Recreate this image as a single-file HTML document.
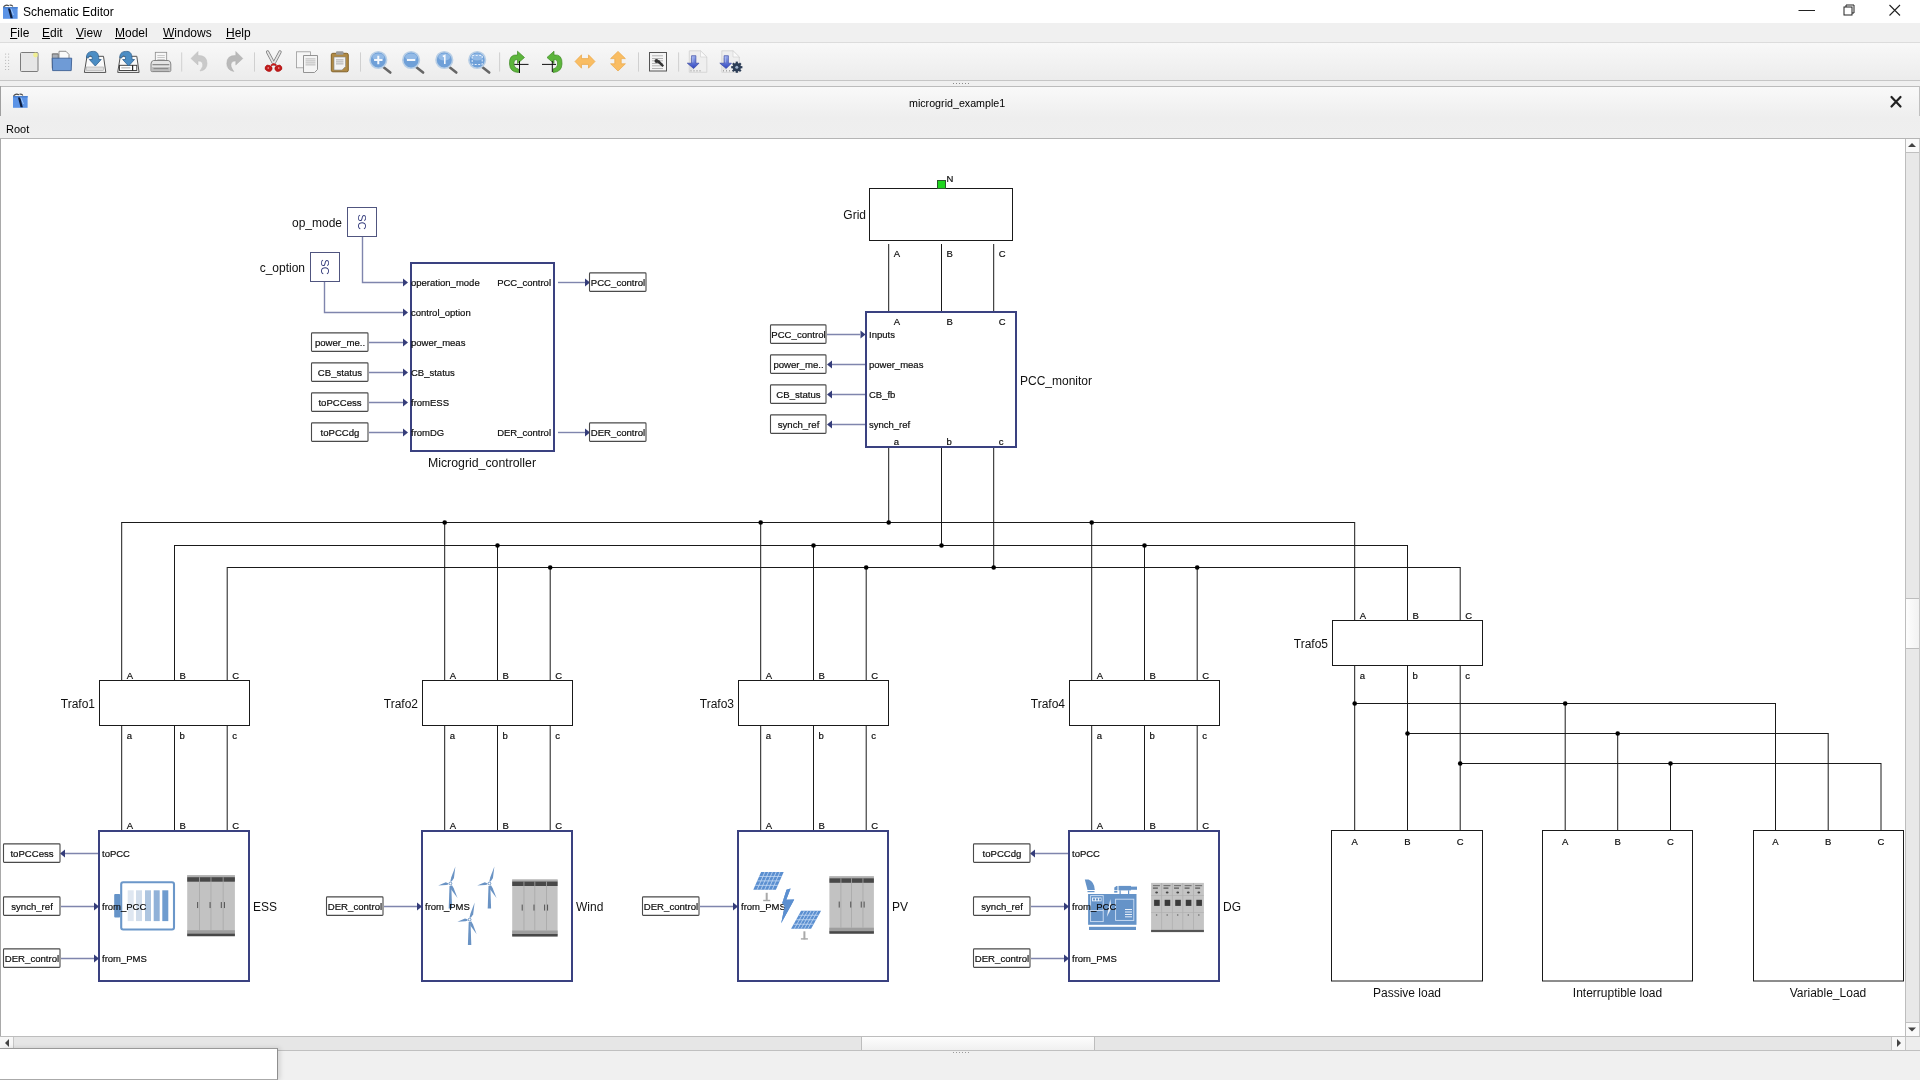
<!DOCTYPE html>
<html><head><meta charset="utf-8">
<style>
*{margin:0;padding:0;box-sizing:border-box}
html,body{width:1920px;height:1080px;overflow:hidden;background:#f0f0f0;font-family:"Liberation Sans", sans-serif;position:relative}
.abs{position:absolute}
.menu{position:absolute;top:3px;font-size:12px;color:#000}
.menu u{text-decoration:underline}
svg text{font-family:"Liberation Sans", sans-serif}
svg,div,span{will-change:transform}
</style></head><body>
<div class="abs" style="left:0;top:0;width:1920px;height:23px;background:#fff"></div>
<svg class="abs" style="left:2px;top:3px" width="18" height="18" viewBox="0 0 18 18"><rect x="1" y="4" width="14.6" height="11.8" fill="#5b93e6"/><rect x="1" y="4" width="14.6" height="1.5" fill="#4a80d0"/><path d="M6,5.5 L8.3,5.5 L10.8,15.3 L8.5,15.3 Z" fill="#0d1d3d"/><path d="M8.8,5.5 L11.5,12" stroke="#a6cdfa" stroke-width="0.9"/><path d="M1.5,3.8 Q4,1 7,2.8 M7.5,2.3 Q10,1.5 10.8,3.5" stroke="#4a4a4a" stroke-width="1.1" fill="none"/></svg>
<div class="abs" style="left:23px;top:4.5px;font-size:12px;color:#000;white-space:nowrap">Schematic Editor</div>
<svg class="abs" style="left:1780px;top:0" width="140" height="23" viewBox="1780 0 140 23">
 <rect x="1798.5" y="10" width="16.5" height="1" fill="#222"/>
 <rect x="1844" y="7" width="8" height="8" fill="none" stroke="#222" stroke-width="1"/>
 <path d="M1846,7 V5 H1854 V13 H1852" fill="none" stroke="#222" stroke-width="1"/>
 <path d="M1889.5,5 L1900,15.5 M1900,5 L1889.5,15.5" stroke="#222" stroke-width="1.1"/>
</svg>
<div class="abs" style="left:0;top:23px;width:1920px;height:20px;background:#f0f0f0"></div>
<div class="abs" style="left:0;top:42px;width:1920px;height:1px;background:#dcdcdc"></div>
<span class="menu" style="left:10px;top:26px"><u>F</u>ile</span>
<span class="menu" style="left:42px;top:26px"><u>E</u>dit</span>
<span class="menu" style="left:76px;top:26px"><u>V</u>iew</span>
<span class="menu" style="left:115px;top:26px"><u>M</u>odel</span>
<span class="menu" style="left:163px;top:26px"><u>W</u>indows</span>
<span class="menu" style="left:226px;top:26px"><u>H</u>elp</span>
<div class="abs" style="left:0;top:43px;width:1920px;height:37px;background:linear-gradient(#f8f8f8,#ececec)"></div>
<div class="abs" style="left:0;top:80px;width:1920px;height:1px;background:#c6c6c6"></div>
<div class="abs" style="left:0;top:81px;width:1920px;height:5px;background:#f0f0f0"></div>
<div class="abs" style="left:953px;top:83px;width:1px;height:1px;background:#8a8a8a"></div><div class="abs" style="left:956px;top:83px;width:1px;height:1px;background:#8a8a8a"></div><div class="abs" style="left:959px;top:83px;width:1px;height:1px;background:#8a8a8a"></div><div class="abs" style="left:962px;top:83px;width:1px;height:1px;background:#8a8a8a"></div><div class="abs" style="left:965px;top:83px;width:1px;height:1px;background:#8a8a8a"></div><div class="abs" style="left:968px;top:83px;width:1px;height:1px;background:#8a8a8a"></div>
<svg class="abs" style="left:0;top:43px" width="760" height="38" viewBox="0 43 760 38"><defs><linearGradient id="impg" x1="0" y1="0" x2="0" y2="1"><stop offset="0" stop-color="#9db0ee"/><stop offset="1" stop-color="#2f45c0"/></linearGradient></defs>
<rect x="5.1" y="53.6" width="1" height="1" fill="#b5b5b5"/>
<rect x="8.1" y="53.6" width="1" height="1" fill="#b5b5b5"/>
<rect x="5.1" y="56.6" width="1" height="1" fill="#b5b5b5"/>
<rect x="8.1" y="56.6" width="1" height="1" fill="#b5b5b5"/>
<rect x="5.1" y="59.9" width="1" height="1" fill="#b5b5b5"/>
<rect x="8.1" y="59.9" width="1" height="1" fill="#b5b5b5"/>
<rect x="5.1" y="62.9" width="1" height="1" fill="#b5b5b5"/>
<rect x="8.1" y="62.9" width="1" height="1" fill="#b5b5b5"/>
<rect x="5.1" y="66.0" width="1" height="1" fill="#b5b5b5"/>
<rect x="8.1" y="66.0" width="1" height="1" fill="#b5b5b5"/>
<rect x="5.1" y="69.0" width="1" height="1" fill="#b5b5b5"/>
<rect x="8.1" y="69.0" width="1" height="1" fill="#b5b5b5"/>
<rect x="20.5" y="52.5" width="17.5" height="19" rx="1" fill="#e6e6e6" stroke="#7b7b7b" stroke-width="1"/>
<circle cx="35.5" cy="55" r="2.4" fill="#f1ef8a" opacity="0.9"/>
<path d="M52.5,55 L58,55 L58,53 L52.5,53 Z" fill="#b9b9b9"/>
<rect x="52.2" y="54" width="6" height="14" fill="#a9aeb5" stroke="#666" stroke-width="0.8"/>
<path d="M59,51.3 L66,51.3 L69,54.5 L69,61 L59,61 Z" fill="#fafafa" stroke="#777" stroke-width="0.8"/>
<path d="M52.2,58.2 L71.7,58.2 L71.2,70.6 L52.6,70.6 Z" fill="#6f9bd6" stroke="#3c5f93" stroke-width="0.9"/>
<g transform="translate(84,0)"><path d="M3,56.3 L19.5,56.3 L21.8,72.4 L0.4,72.4 Z" fill="#fafafa" stroke="#4f4f4f" stroke-width="1" stroke-linejoin="round"/><rect x="2.2" y="67" width="17.3" height="3.5" fill="#dedede" stroke="#aaa" stroke-width="0.6"/><path d="M2.5,57.8 C2.5,52.5 5.5,51.4 9.5,51.4 C13,51.4 14.8,53.5 14.8,59.5 L17.2,59.5 L11.3,66 L5.3,59.5 L8.3,59.5 C8.3,57 7.5,55.6 6.3,55.6 C5.1,55.7 4.7,56.8 4.7,57.8 Z" fill="#4b8dc4" stroke="#2d5f8e" stroke-width="0.8" stroke-linejoin="round"/></g>
<g transform="translate(117.3,0)"><path d="M3,56.3 L19.5,56.3 L21.8,72.4 L0.4,72.4 Z" fill="#fafafa" stroke="#4f4f4f" stroke-width="1" stroke-linejoin="round"/><rect x="2.2" y="65.3" width="17.3" height="5.2" fill="#fff" stroke="#333" stroke-width="0.9"/><rect x="4" y="67" width="9" height="1.6" fill="#c8c8c8"/><rect x="14.8" y="65.3" width="1.1" height="5.2" fill="#111"/><path d="M2.5,57.8 C2.5,52.5 5.5,51.4 9.5,51.4 C13,51.4 14.8,53.5 14.8,59.5 L17.2,59.5 L11.3,66 L5.3,59.5 L8.3,59.5 C8.3,57 7.5,55.6 6.3,55.6 C5.1,55.7 4.7,56.8 4.7,57.8 Z" fill="#4b8dc4" stroke="#2d5f8e" stroke-width="0.8" stroke-linejoin="round"/></g>
<rect x="155.3" y="52.3" width="11.4" height="10" fill="#f6f6f6" stroke="#8a8a8a" stroke-width="0.8"/>
<rect x="157.3" y="55" width="7.5" height="0.7" fill="#b5b5b5"/>
<rect x="157.3" y="57" width="7.5" height="0.7" fill="#b5b5b5"/>
<rect x="157.3" y="59" width="7.5" height="0.7" fill="#b5b5b5"/>
<path d="M153.5,60.5 L168.3,60.5 Q170.8,61 170.8,64 L170.8,70.5 Q170.8,71.6 169.5,71.6 L152.2,71.6 Q151,71.6 151,70.5 L151,64 Q151,61 153.5,60.5 Z" fill="#e4e4e4" stroke="#777" stroke-width="0.9"/>
<rect x="152.5" y="64.3" width="16.8" height="0.9" fill="#666"/>
<rect x="152" y="67" width="17.8" height="4" fill="#bdbdbd"/>
<rect x="153.5" y="68.3" width="14.8" height="0.8" fill="#777"/>
<rect x="181.2" y="52.4" width="1" height="19.2" fill="#d0d0d0"/>
<rect x="254.0" y="52.4" width="1" height="19.2" fill="#d0d0d0"/>
<rect x="360.0" y="52.4" width="1" height="19.2" fill="#d0d0d0"/>
<rect x="499.1" y="52.4" width="1" height="19.2" fill="#d0d0d0"/>
<rect x="638.0" y="52.4" width="1" height="19.2" fill="#d0d0d0"/>
<rect x="678.1" y="52.4" width="1" height="19.2" fill="#d0d0d0"/>
<path d="M191,58.5 L198,51.5 L198,55.5 Q207,55 207,63.5 Q207,70 200,71 Q204,66 202.5,63 Q201,60.5 198,61 L198,65 Z" fill="#c9c9c9" stroke="#bdbdbd" stroke-width="0.5"/>
<path d="M242.8,58.5 L235.8,51.5 L235.8,55.5 Q226.8,55 226.8,63.5 Q226.8,70 233.8,71.5 Q229.8,66 231.3,63 Q232.8,60.5 235.8,61 L235.8,65 Z" fill="#b9b9b9" stroke="#adadad" stroke-width="0.5"/>
<path d="M267.6,52 L274,64 M280,52 L273.6,64" stroke="#7a7a7a" stroke-width="3.3" fill="none" stroke-linecap="round"/>
<path d="M267.6,52 L274,64 M280,52 L273.6,64" stroke="#e4e4e4" stroke-width="1.7" fill="none" stroke-linecap="round"/>
<ellipse cx="268.6" cy="68.3" rx="3.6" ry="3" transform="rotate(25 268.6 68.3)" fill="#c41a1a" stroke="#a51010" stroke-width="0.6"/><ellipse cx="278.4" cy="68.3" rx="3.6" ry="3" transform="rotate(-25 278.4 68.3)" fill="#c41a1a" stroke="#a51010" stroke-width="0.6"/>
<path d="M271,65.5 L273.8,64 L276.5,65.5" stroke="#c41a1a" stroke-width="1.6" fill="none"/>
<circle cx="268.2" cy="68" r="0.7" fill="#f4caca"/><circle cx="278.8" cy="68" r="0.7" fill="#f4caca"/>
<rect x="296.5" y="51.8" width="14" height="16" fill="#f6f6f6" stroke="#999" stroke-width="0.8"/>
<path d="M303.5,55.5 L317.5,55.5 L317.5,69.5 L314.5,72.5 L303.5,72.5 Z" fill="#f4f4f4" stroke="#888" stroke-width="0.9"/>
<rect x="305.5" y="58.5" width="10" height="0.8" fill="#aaa"/>
<rect x="305.5" y="60.5" width="10" height="0.8" fill="#aaa"/>
<rect x="305.5" y="62.5" width="10" height="0.8" fill="#aaa"/>
<rect x="305.5" y="64.5" width="10" height="0.8" fill="#aaa"/>
<rect x="331.3" y="53.3" width="17" height="18.5" rx="1.5" fill="#b08a45" stroke="#7a5a20" stroke-width="0.9"/>
<path d="M334,57 L345.5,57 L345.5,66.5 L342,70 L334,70 Z" fill="#f3f3f3" stroke="#888" stroke-width="0.6"/>
<rect x="336" y="51.2" width="7.5" height="3.5" rx="1" fill="#9a9a9a"/>
<rect x="336" y="59.5" width="7.5" height="0.8" fill="#999"/>
<rect x="336" y="61.5" width="7.5" height="0.8" fill="#999"/>
<rect x="336" y="63.5" width="7.5" height="0.8" fill="#999"/>
<g><line x1="383.3" y1="67" x2="390.3" y2="72.5" stroke="#666" stroke-width="2.6" stroke-linecap="round"/><circle cx="378.3" cy="60" r="8.3" fill="#6fa0d8" stroke="#b9cfe6" stroke-width="1.6"/><ellipse cx="378.3" cy="57" rx="6" ry="3.5" fill="#9cc0ea" opacity="0.8"/><path d="M374.1,60 H382.5 M378.3,55.8 V64.2" stroke="#f4f8fd" stroke-width="2"/></g>
<g><line x1="416.1" y1="67" x2="423.1" y2="72.5" stroke="#666" stroke-width="2.6" stroke-linecap="round"/><circle cx="411.1" cy="60" r="8.3" fill="#6fa0d8" stroke="#b9cfe6" stroke-width="1.6"/><ellipse cx="411.1" cy="57" rx="6" ry="3.5" fill="#9cc0ea" opacity="0.8"/><path d="M406.90000000000003,60 H415.3" stroke="#f4f8fd" stroke-width="2"/></g>
<g><line x1="449.3" y1="67" x2="456.3" y2="72.5" stroke="#666" stroke-width="2.6" stroke-linecap="round"/><circle cx="444.3" cy="60" r="8.3" fill="#6fa0d8" stroke="#b9cfe6" stroke-width="1.6"/><ellipse cx="444.3" cy="57" rx="6" ry="3.5" fill="#9cc0ea" opacity="0.8"/><path d="M442.8,56.5 L444.8,55.5 V64" stroke="#f4f8fd" stroke-width="1.6" fill="none"/></g>
<g><line x1="482.2" y1="67" x2="489.2" y2="72.5" stroke="#666" stroke-width="2.6" stroke-linecap="round"/><circle cx="477.2" cy="60" r="8.3" fill="#6fa0d8" stroke="#b9cfe6" stroke-width="1.6"/><ellipse cx="477.2" cy="57" rx="6" ry="3.5" fill="#9cc0ea" opacity="0.8"/><rect x="472.2" y="55.5" width="10" height="9" fill="none" stroke="#e4eefa" stroke-width="1" stroke-dasharray="2,1.5"/></g>
<path d="M509.5,64 Q509,54 517.5,55 L517.5,51.2 L524.5,57.5 L517.5,63.5 L517.5,59.5 Q513.5,59.5 514,64 Q514,68 518.5,69 L518.5,72.5 Q509.8,72 509.5,64 Z" fill="#5cb53c" stroke="#3f8a25" stroke-width="0.7"/>
<path d="M514.3,64.4 H528.5 M519.5,61 V73" stroke="#111" stroke-width="1"/>
<path d="M562,64 Q562.5,54 554,55 L554,51.2 L547,57.5 L554,63.5 L554,59.5 Q558,59.5 557.5,64 Q557.5,68 553,69 L553,72.5 Q561.7,72 562,64 Z" fill="#5cb53c" stroke="#3f8a25" stroke-width="0.7"/>
<path d="M542,64.4 H556 M552.3,61 V72" stroke="#111" stroke-width="1"/>
<path d="M575,61.5 L581.5,54.8 L581.5,58.6 L588.5,58.6 L588.5,54.8 L595,61.5 L588.5,68.2 L588.5,64.4 L581.5,64.4 L581.5,68.2 Z" fill="#f9bd63" stroke="#eaa646" stroke-width="0.7" stroke-linejoin="round"/>
<path d="M618,51.4 L625.4,58.6 L621.2,58.6 L621.2,63.8 L625.4,63.8 L618,71 L610.6,63.8 L614.8,63.8 L614.8,58.6 L610.6,58.6 Z" fill="#f9bd63" stroke="#eaa646" stroke-width="0.7" stroke-linejoin="round"/>
<rect x="649.5" y="52.5" width="17" height="18.5" fill="#f4f4f4" stroke="#555" stroke-width="1"/>
<rect x="652" y="55.5" width="11" height="0.7" fill="#999"/>
<rect x="652" y="58" width="11" height="0.7" fill="#999"/>
<rect x="652" y="60.5" width="11" height="0.7" fill="#999"/>
<rect x="652" y="63" width="11" height="0.7" fill="#999"/>
<rect x="652" y="65.5" width="11" height="0.7" fill="#999"/>
<rect x="652" y="68" width="11" height="0.7" fill="#999"/>
<path d="M656,61 L659,60 L664,65.5 L662.5,67 L657.5,62.5 Z" fill="#333"/><circle cx="656.5" cy="61" r="2" fill="#333"/>
<g transform="translate(687,0)"><path d="M2.3,50.8 L13.5,50.8 L19.8,57 L19.8,72.3 L2.3,72.3 Z" fill="#efefef" stroke="#d0d0d0" stroke-width="0.8"/><path d="M13.5,50.8 L13.5,57 L19.8,57 Z" fill="#fafafa" stroke="#cfcfcf" stroke-width="0.6"/><rect x="2.8" y="58" width="4" height="12" fill="#e2e2e2"/><path d="M4.6,55.7 H8.9 V63.2 H12 L6.7,68.6 L0.3,63.2 H4.6 Z" fill="url(#impg)" stroke="#2c3a9a" stroke-width="0.6"/><path d="M5.8,56.5 V62.5" stroke="#b8c4f0" stroke-width="0.8"/><path d="M4,71.5 V70 M7,71.5 V70 M10,71.5 V70 M13,71.5 V70" stroke="#8a8a8a" stroke-width="0.7"/></g>
<g transform="translate(719.5,0)"><path d="M2.3,50.8 L13.5,50.8 L19.8,57 L19.8,72.3 L2.3,72.3 Z" fill="#efefef" stroke="#d0d0d0" stroke-width="0.8"/><path d="M13.5,50.8 L13.5,57 L19.8,57 Z" fill="#fafafa" stroke="#cfcfcf" stroke-width="0.6"/><rect x="2.8" y="58" width="4" height="12" fill="#e2e2e2"/><path d="M4.6,55.7 H8.9 V63.2 H12 L6.7,68.6 L0.3,63.2 H4.6 Z" fill="url(#impg)" stroke="#2c3a9a" stroke-width="0.6"/><path d="M5.8,56.5 V62.5" stroke="#b8c4f0" stroke-width="0.8"/><path d="M4,71.5 V70 M7,71.5 V70 M10,71.5 V70 M13,71.5 V70" stroke="#8a8a8a" stroke-width="0.7"/><g transform="translate(17.3,67.2)"><circle r="4.2" fill="#2d3e57"/><rect x="-1.1" y="-5.6" width="2.2" height="2.4" fill="#2d3e57" transform="rotate(0)"/><rect x="-1.1" y="-5.6" width="2.2" height="2.4" fill="#2d3e57" transform="rotate(45)"/><rect x="-1.1" y="-5.6" width="2.2" height="2.4" fill="#2d3e57" transform="rotate(90)"/><rect x="-1.1" y="-5.6" width="2.2" height="2.4" fill="#2d3e57" transform="rotate(135)"/><rect x="-1.1" y="-5.6" width="2.2" height="2.4" fill="#2d3e57" transform="rotate(180)"/><rect x="-1.1" y="-5.6" width="2.2" height="2.4" fill="#2d3e57" transform="rotate(225)"/><rect x="-1.1" y="-5.6" width="2.2" height="2.4" fill="#2d3e57" transform="rotate(270)"/><rect x="-1.1" y="-5.6" width="2.2" height="2.4" fill="#2d3e57" transform="rotate(315)"/><circle r="1.5" fill="#9fb3cc"/></g></g>
</svg>
<div class="abs" style="left:0;top:86px;width:1920px;height:53px;background:linear-gradient(#f9f9f9,#eeeeee 60%,#efefef);border-top:1px solid #bcbcbc;border-bottom:1px solid #b5b5b5"></div>
<div class="abs" style="left:0;top:86px;width:1px;height:30px;background:#a0a0a0"></div>
<div class="abs" style="left:1919px;top:86px;width:1px;height:30px;background:#c0c0c0"></div>
<svg class="abs" style="left:12px;top:92px" width="18" height="18" viewBox="0 0 18 18"><rect x="1" y="4" width="14.6" height="11.8" fill="#5b93e6"/><rect x="1" y="4" width="14.6" height="1.5" fill="#4a80d0"/><path d="M6,5.5 L8.3,5.5 L10.8,15.3 L8.5,15.3 Z" fill="#0d1d3d"/><path d="M8.8,5.5 L11.5,12" stroke="#a6cdfa" stroke-width="0.9"/><path d="M1.5,3.8 Q4,1 7,2.8 M7.5,2.3 Q10,1.5 10.8,3.5" stroke="#4a4a4a" stroke-width="1.1" fill="none"/></svg>
<div class="abs" style="left:909px;top:96.5px;font-size:10.7px;color:#000;white-space:nowrap">microgrid_example1</div>
<svg class="abs" style="left:1888px;top:94px" width="16" height="16" viewBox="0 0 16 16">
 <path d="M3.5,3 L12.5,12.5 M12.5,3 L3.5,12.5" stroke="#222" stroke-width="2.2" stroke-linecap="round"/>
</svg>
<div class="abs" style="left:6px;top:123px;font-size:11px;color:#000">Root</div>
<div class="abs" style="left:0;top:139px;width:1905px;height:897px;background:#fff;border-left:1px solid #a9a9a9"></div>
<svg class="abs" style="left:0;top:139px" width="1905" height="897" viewBox="0 139 1905 897">
<line x1="121.7" y1="522.5" x2="1354.7" y2="522.5" stroke="#1a1a1a" stroke-width="1"/>
<line x1="174.5" y1="545.5" x2="1407.5" y2="545.5" stroke="#1a1a1a" stroke-width="1"/>
<line x1="227.2" y1="567.5" x2="1460.2" y2="567.5" stroke="#1a1a1a" stroke-width="1"/>
<line x1="121.7" y1="522" x2="121.7" y2="680.5" stroke="#1a1a1a" stroke-width="1"/>
<line x1="174.5" y1="545" x2="174.5" y2="680.5" stroke="#1a1a1a" stroke-width="1"/>
<line x1="227.2" y1="567" x2="227.2" y2="680.5" stroke="#1a1a1a" stroke-width="1"/>
<line x1="121.7" y1="725" x2="121.7" y2="831" stroke="#1a1a1a" stroke-width="1"/>
<line x1="174.5" y1="725" x2="174.5" y2="831" stroke="#1a1a1a" stroke-width="1"/>
<line x1="227.2" y1="725" x2="227.2" y2="831" stroke="#1a1a1a" stroke-width="1"/>
<line x1="444.7" y1="522" x2="444.7" y2="680.5" stroke="#1a1a1a" stroke-width="1"/>
<line x1="497.5" y1="545" x2="497.5" y2="680.5" stroke="#1a1a1a" stroke-width="1"/>
<line x1="550.2" y1="567" x2="550.2" y2="680.5" stroke="#1a1a1a" stroke-width="1"/>
<line x1="444.7" y1="725" x2="444.7" y2="831" stroke="#1a1a1a" stroke-width="1"/>
<line x1="497.5" y1="725" x2="497.5" y2="831" stroke="#1a1a1a" stroke-width="1"/>
<line x1="550.2" y1="725" x2="550.2" y2="831" stroke="#1a1a1a" stroke-width="1"/>
<line x1="760.7" y1="522" x2="760.7" y2="680.5" stroke="#1a1a1a" stroke-width="1"/>
<line x1="813.5" y1="545" x2="813.5" y2="680.5" stroke="#1a1a1a" stroke-width="1"/>
<line x1="866.2" y1="567" x2="866.2" y2="680.5" stroke="#1a1a1a" stroke-width="1"/>
<line x1="760.7" y1="725" x2="760.7" y2="831" stroke="#1a1a1a" stroke-width="1"/>
<line x1="813.5" y1="725" x2="813.5" y2="831" stroke="#1a1a1a" stroke-width="1"/>
<line x1="866.2" y1="725" x2="866.2" y2="831" stroke="#1a1a1a" stroke-width="1"/>
<line x1="1091.7" y1="522" x2="1091.7" y2="680.5" stroke="#1a1a1a" stroke-width="1"/>
<line x1="1144.5" y1="545" x2="1144.5" y2="680.5" stroke="#1a1a1a" stroke-width="1"/>
<line x1="1197.2" y1="567" x2="1197.2" y2="680.5" stroke="#1a1a1a" stroke-width="1"/>
<line x1="1091.7" y1="725" x2="1091.7" y2="831" stroke="#1a1a1a" stroke-width="1"/>
<line x1="1144.5" y1="725" x2="1144.5" y2="831" stroke="#1a1a1a" stroke-width="1"/>
<line x1="1197.2" y1="725" x2="1197.2" y2="831" stroke="#1a1a1a" stroke-width="1"/>
<line x1="1354.7" y1="522" x2="1354.7" y2="620.5" stroke="#1a1a1a" stroke-width="1"/>
<line x1="1407.5" y1="545" x2="1407.5" y2="620.5" stroke="#1a1a1a" stroke-width="1"/>
<line x1="1460.2" y1="567" x2="1460.2" y2="620.5" stroke="#1a1a1a" stroke-width="1"/>
<line x1="1354.7" y1="665" x2="1354.7" y2="830.5" stroke="#1a1a1a" stroke-width="1"/>
<line x1="1407.5" y1="665" x2="1407.5" y2="830.5" stroke="#1a1a1a" stroke-width="1"/>
<line x1="1460.2" y1="665" x2="1460.2" y2="830.5" stroke="#1a1a1a" stroke-width="1"/>
<line x1="1354.7" y1="703.5" x2="1775.5" y2="703.5" stroke="#1a1a1a" stroke-width="1"/>
<line x1="1775.5" y1="703" x2="1775.5" y2="830.5" stroke="#1a1a1a" stroke-width="1"/>
<line x1="1407.5" y1="733.5" x2="1828.2" y2="733.5" stroke="#1a1a1a" stroke-width="1"/>
<line x1="1828.2" y1="733" x2="1828.2" y2="830.5" stroke="#1a1a1a" stroke-width="1"/>
<line x1="1460.2" y1="763.5" x2="1881" y2="763.5" stroke="#1a1a1a" stroke-width="1"/>
<line x1="1881" y1="763" x2="1881" y2="830.5" stroke="#1a1a1a" stroke-width="1"/>
<line x1="1565.2" y1="703.5" x2="1565.2" y2="830.5" stroke="#1a1a1a" stroke-width="1"/>
<line x1="1617.7" y1="733.5" x2="1617.7" y2="830.5" stroke="#1a1a1a" stroke-width="1"/>
<line x1="1670.5" y1="763.5" x2="1670.5" y2="830.5" stroke="#1a1a1a" stroke-width="1"/>
<line x1="888.7" y1="244" x2="888.7" y2="312" stroke="#1a1a1a" stroke-width="1"/>
<line x1="941.5" y1="244" x2="941.5" y2="312" stroke="#1a1a1a" stroke-width="1"/>
<line x1="993.7" y1="244" x2="993.7" y2="312" stroke="#1a1a1a" stroke-width="1"/>
<line x1="888.7" y1="447" x2="888.7" y2="522.5" stroke="#1a1a1a" stroke-width="1"/>
<line x1="941.5" y1="447" x2="941.5" y2="545.5" stroke="#1a1a1a" stroke-width="1"/>
<line x1="993.7" y1="447" x2="993.7" y2="567.5" stroke="#1a1a1a" stroke-width="1"/>
<circle cx="444.7" cy="522.5" r="2.3" fill="#000"/>
<circle cx="497.5" cy="545.5" r="2.3" fill="#000"/>
<circle cx="550.2" cy="567.5" r="2.3" fill="#000"/>
<circle cx="760.7" cy="522.5" r="2.3" fill="#000"/>
<circle cx="813.5" cy="545.5" r="2.3" fill="#000"/>
<circle cx="866.2" cy="567.5" r="2.3" fill="#000"/>
<circle cx="1091.7" cy="522.5" r="2.3" fill="#000"/>
<circle cx="1144.5" cy="545.5" r="2.3" fill="#000"/>
<circle cx="1197.2" cy="567.5" r="2.3" fill="#000"/>
<circle cx="888.7" cy="522.5" r="2.3" fill="#000"/>
<circle cx="941.5" cy="545.5" r="2.3" fill="#000"/>
<circle cx="993.7" cy="567.5" r="2.3" fill="#000"/>
<circle cx="1354.7" cy="703.5" r="2.3" fill="#000"/>
<circle cx="1565.2" cy="703.5" r="2.3" fill="#000"/>
<circle cx="1407.5" cy="733.5" r="2.3" fill="#000"/>
<circle cx="1617.7" cy="733.5" r="2.3" fill="#000"/>
<circle cx="1460.2" cy="763.5" r="2.3" fill="#000"/>
<circle cx="1670.5" cy="763.5" r="2.3" fill="#000"/>
<rect x="99.5" y="680.5" width="150" height="45" fill="#fff" stroke="#1a1a1a" stroke-width="1" rx="0"/>
<text x="95" y="707.5" font-size="12" text-anchor="end" fill="#111" >Trafo1</text>
<text x="126.7" y="678.5" font-size="9.5" text-anchor="start" fill="#111" stroke="#000" stroke-width="0.18">A</text>
<text x="179.5" y="678.5" font-size="9.5" text-anchor="start" fill="#111" stroke="#000" stroke-width="0.18">B</text>
<text x="232.2" y="678.5" font-size="9.5" text-anchor="start" fill="#111" stroke="#000" stroke-width="0.18">C</text>
<text x="126.7" y="739" font-size="9.5" text-anchor="start" fill="#111" stroke="#000" stroke-width="0.18">a</text>
<text x="179.5" y="739" font-size="9.5" text-anchor="start" fill="#111" stroke="#000" stroke-width="0.18">b</text>
<text x="232.2" y="739" font-size="9.5" text-anchor="start" fill="#111" stroke="#000" stroke-width="0.18">c</text>
<rect x="422.5" y="680.5" width="150" height="45" fill="#fff" stroke="#1a1a1a" stroke-width="1" rx="0"/>
<text x="418" y="707.5" font-size="12" text-anchor="end" fill="#111" >Trafo2</text>
<text x="449.7" y="678.5" font-size="9.5" text-anchor="start" fill="#111" stroke="#000" stroke-width="0.18">A</text>
<text x="502.5" y="678.5" font-size="9.5" text-anchor="start" fill="#111" stroke="#000" stroke-width="0.18">B</text>
<text x="555.2" y="678.5" font-size="9.5" text-anchor="start" fill="#111" stroke="#000" stroke-width="0.18">C</text>
<text x="449.7" y="739" font-size="9.5" text-anchor="start" fill="#111" stroke="#000" stroke-width="0.18">a</text>
<text x="502.5" y="739" font-size="9.5" text-anchor="start" fill="#111" stroke="#000" stroke-width="0.18">b</text>
<text x="555.2" y="739" font-size="9.5" text-anchor="start" fill="#111" stroke="#000" stroke-width="0.18">c</text>
<rect x="738.5" y="680.5" width="150" height="45" fill="#fff" stroke="#1a1a1a" stroke-width="1" rx="0"/>
<text x="734" y="707.5" font-size="12" text-anchor="end" fill="#111" >Trafo3</text>
<text x="765.7" y="678.5" font-size="9.5" text-anchor="start" fill="#111" stroke="#000" stroke-width="0.18">A</text>
<text x="818.5" y="678.5" font-size="9.5" text-anchor="start" fill="#111" stroke="#000" stroke-width="0.18">B</text>
<text x="871.2" y="678.5" font-size="9.5" text-anchor="start" fill="#111" stroke="#000" stroke-width="0.18">C</text>
<text x="765.7" y="739" font-size="9.5" text-anchor="start" fill="#111" stroke="#000" stroke-width="0.18">a</text>
<text x="818.5" y="739" font-size="9.5" text-anchor="start" fill="#111" stroke="#000" stroke-width="0.18">b</text>
<text x="871.2" y="739" font-size="9.5" text-anchor="start" fill="#111" stroke="#000" stroke-width="0.18">c</text>
<rect x="1069.5" y="680.5" width="150" height="45" fill="#fff" stroke="#1a1a1a" stroke-width="1" rx="0"/>
<text x="1065" y="707.5" font-size="12" text-anchor="end" fill="#111" >Trafo4</text>
<text x="1096.7" y="678.5" font-size="9.5" text-anchor="start" fill="#111" stroke="#000" stroke-width="0.18">A</text>
<text x="1149.5" y="678.5" font-size="9.5" text-anchor="start" fill="#111" stroke="#000" stroke-width="0.18">B</text>
<text x="1202.2" y="678.5" font-size="9.5" text-anchor="start" fill="#111" stroke="#000" stroke-width="0.18">C</text>
<text x="1096.7" y="739" font-size="9.5" text-anchor="start" fill="#111" stroke="#000" stroke-width="0.18">a</text>
<text x="1149.5" y="739" font-size="9.5" text-anchor="start" fill="#111" stroke="#000" stroke-width="0.18">b</text>
<text x="1202.2" y="739" font-size="9.5" text-anchor="start" fill="#111" stroke="#000" stroke-width="0.18">c</text>
<rect x="1332.5" y="620.5" width="150" height="45" fill="#fff" stroke="#1a1a1a" stroke-width="1" rx="0"/>
<text x="1328" y="647.5" font-size="12" text-anchor="end" fill="#111" >Trafo5</text>
<text x="1359.7" y="618.5" font-size="9.5" text-anchor="start" fill="#111" stroke="#000" stroke-width="0.18">A</text>
<text x="1412.5" y="618.5" font-size="9.5" text-anchor="start" fill="#111" stroke="#000" stroke-width="0.18">B</text>
<text x="1465.2" y="618.5" font-size="9.5" text-anchor="start" fill="#111" stroke="#000" stroke-width="0.18">C</text>
<text x="1359.7" y="679" font-size="9.5" text-anchor="start" fill="#111" stroke="#000" stroke-width="0.18">a</text>
<text x="1412.5" y="679" font-size="9.5" text-anchor="start" fill="#111" stroke="#000" stroke-width="0.18">b</text>
<text x="1465.2" y="679" font-size="9.5" text-anchor="start" fill="#111" stroke="#000" stroke-width="0.18">c</text>
<rect x="869.5" y="188.5" width="143" height="52" fill="#fff" stroke="#1a1a1a" stroke-width="1" rx="0"/>
<rect x="937.5" y="180.5" width="8" height="8" fill="#1ed51e" stroke="#2a5a2a" stroke-width="1"/>
<text x="946.5" y="181.5" font-size="9.5" text-anchor="start" fill="#111" stroke="#000" stroke-width="0.18">N</text>
<text x="866" y="218.5" font-size="12" text-anchor="end" fill="#111" >Grid</text>
<text x="893.7" y="257.2" font-size="9.5" text-anchor="start" fill="#111" stroke="#000" stroke-width="0.18">A</text>
<text x="946.5" y="257.2" font-size="9.5" text-anchor="start" fill="#111" stroke="#000" stroke-width="0.18">B</text>
<text x="998.7" y="257.2" font-size="9.5" text-anchor="start" fill="#111" stroke="#000" stroke-width="0.18">C</text>
<rect x="866" y="312" width="150" height="135" fill="#fff" stroke="#3a4180" stroke-width="2" rx="0"/>
<text x="893.7" y="325" font-size="9.5" text-anchor="start" fill="#111" stroke="#000" stroke-width="0.18">A</text>
<text x="946.5" y="325" font-size="9.5" text-anchor="start" fill="#111" stroke="#000" stroke-width="0.18">B</text>
<text x="998.7" y="325" font-size="9.5" text-anchor="start" fill="#111" stroke="#000" stroke-width="0.18">C</text>
<text x="893.7" y="445" font-size="9.5" text-anchor="start" fill="#111" stroke="#000" stroke-width="0.18">a</text>
<text x="946.5" y="445" font-size="9.5" text-anchor="start" fill="#111" stroke="#000" stroke-width="0.18">b</text>
<text x="998.7" y="445" font-size="9.5" text-anchor="start" fill="#111" stroke="#000" stroke-width="0.18">c</text>
<text x="1020" y="384.5" font-size="12" text-anchor="start" fill="#111" >PCC_monitor</text>
<text x="869" y="338.0" font-size="9.5" text-anchor="start" fill="#111" stroke="#000" stroke-width="0.18">Inputs</text>
<line x1="827" y1="334.5" x2="860" y2="334.5" stroke="#7f85ad" stroke-width="1.4"/>
<path d="M865.5,334.5 L860.5,330.5 L860.5,338.5 Z" fill="#353d7a"/>
<text x="869" y="368.0" font-size="9.5" text-anchor="start" fill="#111" stroke="#000" stroke-width="0.18">power_meas</text>
<line x1="832" y1="364.5" x2="865" y2="364.5" stroke="#7f85ad" stroke-width="1.4"/>
<path d="M827,364.5 L832,360.5 L832,368.5 Z" fill="#353d7a"/>
<text x="869" y="398.0" font-size="9.5" text-anchor="start" fill="#111" stroke="#000" stroke-width="0.18">CB_fb</text>
<line x1="832" y1="394.5" x2="865" y2="394.5" stroke="#7f85ad" stroke-width="1.4"/>
<path d="M827,394.5 L832,390.5 L832,398.5 Z" fill="#353d7a"/>
<text x="869" y="428.0" font-size="9.5" text-anchor="start" fill="#111" stroke="#000" stroke-width="0.18">synch_ref</text>
<line x1="832" y1="424.5" x2="865" y2="424.5" stroke="#7f85ad" stroke-width="1.4"/>
<path d="M827,424.5 L832,420.5 L832,428.5 Z" fill="#353d7a"/>
<rect x="770.5" y="324.9" width="55.5" height="18.5" fill="#fff" stroke="#4a4a4a" stroke-width="1.1" rx="0.8"/>
<text x="798.5" y="338.0" font-size="9.6" text-anchor="middle" fill="#111" stroke="#000" stroke-width="0.18">PCC_control</text>
<rect x="770.5" y="354.9" width="55.5" height="18.5" fill="#fff" stroke="#4a4a4a" stroke-width="1.1" rx="0.8"/>
<text x="798.5" y="368.0" font-size="9.6" text-anchor="middle" fill="#111" stroke="#000" stroke-width="0.18">power_me..</text>
<rect x="770.5" y="384.9" width="55.5" height="18.5" fill="#fff" stroke="#4a4a4a" stroke-width="1.1" rx="0.8"/>
<text x="798.5" y="398.0" font-size="9.6" text-anchor="middle" fill="#111" stroke="#000" stroke-width="0.18">CB_status</text>
<rect x="770.5" y="414.9" width="55.5" height="18.5" fill="#fff" stroke="#4a4a4a" stroke-width="1.1" rx="0.8"/>
<text x="798.5" y="428.0" font-size="9.6" text-anchor="middle" fill="#111" stroke="#000" stroke-width="0.18">synch_ref</text>
<rect x="411" y="263" width="143" height="188" fill="#fff" stroke="#3a4180" stroke-width="2" rx="0"/>
<text x="482" y="467" font-size="12.3" text-anchor="middle" fill="#111" >Microgrid_controller</text>
<text x="411" y="286.0" font-size="9.5" text-anchor="start" fill="#111" stroke="#000" stroke-width="0.18">operation_mode</text>
<path d="M408,282.5 L403,278.5 L403,286.5 Z" fill="#353d7a"/>
<text x="411" y="316.0" font-size="9.5" text-anchor="start" fill="#111" stroke="#000" stroke-width="0.18">control_option</text>
<path d="M408,312.5 L403,308.5 L403,316.5 Z" fill="#353d7a"/>
<text x="411" y="346.0" font-size="9.5" text-anchor="start" fill="#111" stroke="#000" stroke-width="0.18">power_meas</text>
<path d="M408,342.5 L403,338.5 L403,346.5 Z" fill="#353d7a"/>
<text x="411" y="376.0" font-size="9.5" text-anchor="start" fill="#111" stroke="#000" stroke-width="0.18">CB_status</text>
<path d="M408,372.5 L403,368.5 L403,376.5 Z" fill="#353d7a"/>
<text x="411" y="406.0" font-size="9.5" text-anchor="start" fill="#111" stroke="#000" stroke-width="0.18">fromESS</text>
<path d="M408,402.5 L403,398.5 L403,406.5 Z" fill="#353d7a"/>
<text x="411" y="436.0" font-size="9.5" text-anchor="start" fill="#111" stroke="#000" stroke-width="0.18">fromDG</text>
<path d="M408,432.5 L403,428.5 L403,436.5 Z" fill="#353d7a"/>
<text x="551" y="286.0" font-size="9.5" text-anchor="end" fill="#111" stroke="#000" stroke-width="0.18">PCC_control</text>
<line x1="558" y1="282.5" x2="585" y2="282.5" stroke="#7f85ad" stroke-width="1.4"/>
<path d="M590,282.5 L585,278.5 L585,286.5 Z" fill="#353d7a"/>
<rect x="589.5" y="272.9" width="56.5" height="18.5" fill="#fff" stroke="#4a4a4a" stroke-width="1.1" rx="0.8"/>
<text x="618.0" y="286.0" font-size="9.6" text-anchor="middle" fill="#111" stroke="#000" stroke-width="0.18">PCC_control</text>
<text x="551" y="436.0" font-size="9.5" text-anchor="end" fill="#111" stroke="#000" stroke-width="0.18">DER_control</text>
<line x1="558" y1="432.5" x2="585" y2="432.5" stroke="#7f85ad" stroke-width="1.4"/>
<path d="M590,432.5 L585,428.5 L585,436.5 Z" fill="#353d7a"/>
<rect x="589.5" y="422.9" width="56.5" height="18.5" fill="#fff" stroke="#4a4a4a" stroke-width="1.1" rx="0.8"/>
<text x="618.0" y="436.0" font-size="9.6" text-anchor="middle" fill="#111" stroke="#000" stroke-width="0.18">DER_control</text>
<rect x="311.5" y="332.9" width="56.5" height="18.5" fill="#fff" stroke="#4a4a4a" stroke-width="1.1" rx="0.8"/>
<text x="340.0" y="346.0" font-size="9.6" text-anchor="middle" fill="#111" stroke="#000" stroke-width="0.18">power_me..</text>
<line x1="369" y1="342.5" x2="403" y2="342.5" stroke="#7f85ad" stroke-width="1.4"/>
<rect x="311.5" y="362.9" width="56.5" height="18.5" fill="#fff" stroke="#4a4a4a" stroke-width="1.1" rx="0.8"/>
<text x="340.0" y="376.0" font-size="9.6" text-anchor="middle" fill="#111" stroke="#000" stroke-width="0.18">CB_status</text>
<line x1="369" y1="372.5" x2="403" y2="372.5" stroke="#7f85ad" stroke-width="1.4"/>
<rect x="311.5" y="392.9" width="56.5" height="18.5" fill="#fff" stroke="#4a4a4a" stroke-width="1.1" rx="0.8"/>
<text x="340.0" y="406.0" font-size="9.6" text-anchor="middle" fill="#111" stroke="#000" stroke-width="0.18">toPCCess</text>
<line x1="369" y1="402.5" x2="403" y2="402.5" stroke="#7f85ad" stroke-width="1.4"/>
<rect x="311.5" y="422.9" width="56.5" height="18.5" fill="#fff" stroke="#4a4a4a" stroke-width="1.1" rx="0.8"/>
<text x="340.0" y="436.0" font-size="9.6" text-anchor="middle" fill="#111" stroke="#000" stroke-width="0.18">toPCCdg</text>
<line x1="369" y1="432.5" x2="403" y2="432.5" stroke="#7f85ad" stroke-width="1.4"/>
<polyline points="362.5,236 362.5,282.5 403,282.5" fill="none" stroke="#7f85ad" stroke-width="1.4"/>
<polyline points="324.5,281 324.5,312.5 403,312.5" fill="none" stroke="#7f85ad" stroke-width="1.4"/>
<rect x="347.5" y="207.5" width="29" height="29" fill="#fff" stroke="#50557f" stroke-width="1" rx="0"/>
<rect x="310.5" y="252.5" width="29" height="29" fill="#fff" stroke="#50557f" stroke-width="1" rx="0"/>
<text x="0" y="0" font-size="11" fill="#343c7c" transform="translate(357.5,222) rotate(90)" text-anchor="middle">SC</text>
<text x="0" y="0" font-size="11" fill="#343c7c" transform="translate(320.5,267) rotate(90)" text-anchor="middle">SC</text>
<text x="342" y="226.5" font-size="12" text-anchor="end" fill="#111" >op_mode</text>
<text x="305" y="271.5" font-size="12" text-anchor="end" fill="#111" >c_option</text>
<rect x="99" y="831" width="150" height="150" fill="#fff" stroke="#3a4180" stroke-width="2" rx="0"/>
<text x="253" y="911" font-size="12" text-anchor="start" fill="#111" >ESS</text>
<text x="126.7" y="828.5" font-size="9.5" text-anchor="start" fill="#111" stroke="#000" stroke-width="0.18">A</text>
<text x="179.5" y="828.5" font-size="9.5" text-anchor="start" fill="#111" stroke="#000" stroke-width="0.18">B</text>
<text x="232.2" y="828.5" font-size="9.5" text-anchor="start" fill="#111" stroke="#000" stroke-width="0.18">C</text>
<rect x="422" y="831" width="150" height="150" fill="#fff" stroke="#3a4180" stroke-width="2" rx="0"/>
<text x="576" y="911" font-size="12" text-anchor="start" fill="#111" >Wind</text>
<text x="449.7" y="828.5" font-size="9.5" text-anchor="start" fill="#111" stroke="#000" stroke-width="0.18">A</text>
<text x="502.5" y="828.5" font-size="9.5" text-anchor="start" fill="#111" stroke="#000" stroke-width="0.18">B</text>
<text x="555.2" y="828.5" font-size="9.5" text-anchor="start" fill="#111" stroke="#000" stroke-width="0.18">C</text>
<rect x="738" y="831" width="150" height="150" fill="#fff" stroke="#3a4180" stroke-width="2" rx="0"/>
<text x="892" y="911" font-size="12" text-anchor="start" fill="#111" >PV</text>
<text x="765.7" y="828.5" font-size="9.5" text-anchor="start" fill="#111" stroke="#000" stroke-width="0.18">A</text>
<text x="818.5" y="828.5" font-size="9.5" text-anchor="start" fill="#111" stroke="#000" stroke-width="0.18">B</text>
<text x="871.2" y="828.5" font-size="9.5" text-anchor="start" fill="#111" stroke="#000" stroke-width="0.18">C</text>
<rect x="1069" y="831" width="150" height="150" fill="#fff" stroke="#3a4180" stroke-width="2" rx="0"/>
<text x="1223" y="911" font-size="12" text-anchor="start" fill="#111" >DG</text>
<text x="1096.7" y="828.5" font-size="9.5" text-anchor="start" fill="#111" stroke="#000" stroke-width="0.18">A</text>
<text x="1149.5" y="828.5" font-size="9.5" text-anchor="start" fill="#111" stroke="#000" stroke-width="0.18">B</text>
<text x="1202.2" y="828.5" font-size="9.5" text-anchor="start" fill="#111" stroke="#000" stroke-width="0.18">C</text>
<rect x="1331.5" y="830.5" width="151" height="150.5" fill="#fff" stroke="#1a1a1a" stroke-width="1" rx="0"/>
<text x="1407" y="997" font-size="12" text-anchor="middle" fill="#111" >Passive load</text>
<text x="1354.7" y="844.5" font-size="9.5" text-anchor="middle" fill="#111" stroke="#000" stroke-width="0.18">A</text>
<text x="1407.5" y="844.5" font-size="9.5" text-anchor="middle" fill="#111" stroke="#000" stroke-width="0.18">B</text>
<text x="1460.2" y="844.5" font-size="9.5" text-anchor="middle" fill="#111" stroke="#000" stroke-width="0.18">C</text>
<rect x="1542.5" y="830.5" width="150" height="150.5" fill="#fff" stroke="#1a1a1a" stroke-width="1" rx="0"/>
<text x="1617.5" y="997" font-size="12" text-anchor="middle" fill="#111" >Interruptible load</text>
<text x="1565.2" y="844.5" font-size="9.5" text-anchor="middle" fill="#111" stroke="#000" stroke-width="0.18">A</text>
<text x="1617.7" y="844.5" font-size="9.5" text-anchor="middle" fill="#111" stroke="#000" stroke-width="0.18">B</text>
<text x="1670.5" y="844.5" font-size="9.5" text-anchor="middle" fill="#111" stroke="#000" stroke-width="0.18">C</text>
<rect x="1753.5" y="830.5" width="150" height="150.5" fill="#fff" stroke="#1a1a1a" stroke-width="1" rx="0"/>
<text x="1828" y="997" font-size="12" text-anchor="middle" fill="#111" >Variable_Load</text>
<text x="1775.5" y="844.5" font-size="9.5" text-anchor="middle" fill="#111" stroke="#000" stroke-width="0.18">A</text>
<text x="1828.2" y="844.5" font-size="9.5" text-anchor="middle" fill="#111" stroke="#000" stroke-width="0.18">B</text>
<text x="1881" y="844.5" font-size="9.5" text-anchor="middle" fill="#111" stroke="#000" stroke-width="0.18">C</text>
<rect x="121.2" y="882.2" width="52.8" height="47.3" rx="2" fill="#fff" stroke="#6b97c9" stroke-width="2.1"/>
<rect x="114.2" y="894" width="6" height="23.4" rx="1" fill="#6593c8"/>
<rect x="127.7" y="890.3" width="6" height="30.8" fill="#dfe7f1"/>
<rect x="136" y="890.3" width="6" height="30.8" fill="#d1ddeb"/>
<rect x="145" y="890.3" width="6" height="30.8" fill="#adc5e0"/>
<rect x="153.7" y="890.3" width="6" height="30.8" fill="#90b1d8"/>
<rect x="162.3" y="890.3" width="6" height="30.8" fill="#6f9ccf"/>
<g transform="translate(187.2,875.2)"><rect x="0" y="0" width="47.7" height="61" fill="#c2c2c2"/><rect x="0" y="0" width="47.7" height="2" fill="#b0b0b0"/><rect x="0" y="2" width="47.7" height="4.5" fill="#484848"/><rect x="0" y="55" width="47.7" height="4" fill="#9e9e9e"/><rect x="0" y="58.5" width="47.7" height="2.5" fill="#484848"/><rect x="11.925" y="2" width="0.8" height="53" fill="#a8a8a8"/><rect x="23.373" y="2" width="0.8" height="53" fill="#a8a8a8"/><rect x="35.536500000000004" y="2" width="0.8" height="53" fill="#a8a8a8"/><rect x="10.017" y="26.84" width="0.9" height="6" fill="#444"/><rect x="22.419" y="26.84" width="0.9" height="6" fill="#444"/><rect x="33.6285" y="26.84" width="0.9" height="6" fill="#444"/><rect x="36.729000000000006" y="26.84" width="0.9" height="6" fill="#444"/></g>
<g fill="#6a93c4"><path d="M449.5,886.0 L451.29999999999995,886.0 L452.09999999999997,908.5 L448.7,908.5 Z"/><path d="M451.69232176388124,881.5869123233373 L453.9727944529854,878.0861160155839 L455.4,866.5 L451.2865710485858,877.2960503084075 L450.3492100616815,881.1918794697491 Z"/><path d="M448.113139739035,883.1833453824449 L445.8076908357029,882.3625372359884 L438.2,885.6 L446.2826727620355,885.1219560461108 L448.3506307022012,884.5630547875062 Z"/><path d="M450.73261801813453,885.7845930171504 L451.17632892165676,889.4409290860436 L457.5,898.1 L453.69437051079416,888.216402011874 L451.9916388127033,885.1723294800656 Z"/></g><circle cx="450.4" cy="883.5" r="1.4" fill="none" stroke="#6a93c4" stroke-width="1"/>
<g fill="#6a93c4"><path d="M488.5,886.0 L490.29999999999995,886.0 L491.09999999999997,908.5 L487.7,908.5 Z"/><path d="M490.69232176388124,881.5869123233373 L492.9727944529854,878.0861160155839 L494.4,866.5 L490.2865710485858,877.2960503084075 L489.3492100616815,881.1918794697491 Z"/><path d="M487.113139739035,883.1833453824449 L484.8076908357029,882.3625372359884 L477.2,885.6 L485.2826727620355,885.1219560461108 L487.3506307022012,884.5630547875062 Z"/><path d="M489.73261801813453,885.7845930171504 L490.17632892165676,889.4409290860436 L496.5,898.1 L492.69437051079416,888.216402011874 L490.9916388127033,885.1723294800656 Z"/></g><circle cx="489.4" cy="883.5" r="1.4" fill="none" stroke="#6a93c4" stroke-width="1"/>
<g fill="#6a93c4"><path d="M468.70000000000005,922.1 L470.5,922.1 L471.3,945 L467.90000000000003,945 Z"/><path d="M470.8923217638813,917.6869123233373 L473.17279445298544,914.1861160155839 L474.6,902.6 L470.48657104858586,913.3960503084076 L469.54921006168155,917.2918794697491 Z"/><path d="M467.313139739035,919.283345382445 L465.00769083570293,918.4625372359884 L457.40000000000003,921.7 L465.4826727620355,921.2219560461108 L467.55063070220126,920.6630547875062 Z"/><path d="M469.9326180181346,921.8845930171505 L470.3763289216568,925.5409290860437 L476.70000000000005,934.2 L472.8943705107942,924.3164020118741 L471.19163881270333,921.2723294800657 Z"/></g><circle cx="469.6" cy="919.6" r="1.4" fill="none" stroke="#6a93c4" stroke-width="1"/>
<g transform="translate(512.2,879.5)"><rect x="0" y="0" width="45.4" height="57" fill="#c2c2c2"/><rect x="0" y="0" width="45.4" height="2" fill="#b0b0b0"/><rect x="0" y="2" width="45.4" height="4.5" fill="#484848"/><rect x="0" y="51" width="45.4" height="4" fill="#9e9e9e"/><rect x="0" y="54.5" width="45.4" height="2.5" fill="#484848"/><rect x="11.35" y="2" width="0.8" height="49" fill="#a8a8a8"/><rect x="22.246" y="2" width="0.8" height="49" fill="#a8a8a8"/><rect x="33.823" y="2" width="0.8" height="49" fill="#a8a8a8"/><rect x="9.533999999999999" y="25.080000000000002" width="0.9" height="6" fill="#444"/><rect x="21.337999999999997" y="25.080000000000002" width="0.9" height="6" fill="#444"/><rect x="32.007" y="25.080000000000002" width="0.9" height="6" fill="#444"/><rect x="34.958" y="25.080000000000002" width="0.9" height="6" fill="#444"/></g>
<polygon points="761.1,872 783.7,872 775.9000000000001,889.8 753.3000000000001,889.8" fill="#5b8fd0"/><line x1="759.15" y1="876.45" x2="781.75" y2="876.45" stroke="#c5dbf5" stroke-width="0.8"/><line x1="757.2" y1="880.9" x2="779.8000000000001" y2="880.9" stroke="#c5dbf5" stroke-width="0.8"/><line x1="755.25" y1="885.35" x2="777.85" y2="885.35" stroke="#c5dbf5" stroke-width="0.8"/><line x1="764.8666666666667" y1="872" x2="757.0666666666667" y2="889.8" stroke="#c5dbf5" stroke-width="0.8"/><line x1="768.6333333333333" y1="872" x2="760.8333333333334" y2="889.8" stroke="#c5dbf5" stroke-width="0.8"/><line x1="772.4" y1="872" x2="764.6" y2="889.8" stroke="#c5dbf5" stroke-width="0.8"/><line x1="776.1666666666667" y1="872" x2="768.3666666666668" y2="889.8" stroke="#c5dbf5" stroke-width="0.8"/><line x1="779.9333333333334" y1="872" x2="772.1333333333334" y2="889.8" stroke="#c5dbf5" stroke-width="0.8"/>
<rect x="765.7" y="892.8" width="2" height="8.200000000000045" fill="#a9a9a9"/><rect x="763.2" y="899.8" width="7" height="1.4" fill="#a9a9a9"/>
<polygon points="801.1,910.8 821.1,910.8 811.1,928.6999999999999 791.1,928.6999999999999" fill="#5b8fd0"/><line x1="798.6" y1="915.275" x2="818.6" y2="915.275" stroke="#c5dbf5" stroke-width="0.8"/><line x1="796.1" y1="919.75" x2="816.1" y2="919.75" stroke="#c5dbf5" stroke-width="0.8"/><line x1="793.6" y1="924.2249999999999" x2="813.6" y2="924.2249999999999" stroke="#c5dbf5" stroke-width="0.8"/><line x1="804.4333333333334" y1="910.8" x2="794.4333333333334" y2="928.6999999999999" stroke="#c5dbf5" stroke-width="0.8"/><line x1="807.7666666666667" y1="910.8" x2="797.7666666666667" y2="928.6999999999999" stroke="#c5dbf5" stroke-width="0.8"/><line x1="811.1" y1="910.8" x2="801.1" y2="928.6999999999999" stroke="#c5dbf5" stroke-width="0.8"/><line x1="814.4333333333334" y1="910.8" x2="804.4333333333334" y2="928.6999999999999" stroke="#c5dbf5" stroke-width="0.8"/><line x1="817.7666666666667" y1="910.8" x2="807.7666666666667" y2="928.6999999999999" stroke="#c5dbf5" stroke-width="0.8"/>
<rect x="803.4" y="931.3" width="2" height="8.100000000000023" fill="#a9a9a9"/><rect x="800.9" y="938.1999999999999" width="7" height="1.4" fill="#a9a9a9"/>
<polygon points="786.5,889.8 790.6,888.6 786.3,899.8 794.2,899.6 781.2,923.2 784.6,906.5 782.3,903" fill="#5b8fd0"/>
<g transform="translate(829.4,876.3)"><rect x="0" y="0" width="44.5" height="57.4" fill="#c2c2c2"/><rect x="0" y="0" width="44.5" height="2" fill="#b0b0b0"/><rect x="0" y="2" width="44.5" height="4.5" fill="#484848"/><rect x="0" y="51.4" width="44.5" height="4" fill="#9e9e9e"/><rect x="0" y="54.9" width="44.5" height="2.5" fill="#484848"/><rect x="11.125" y="2" width="0.8" height="49.4" fill="#a8a8a8"/><rect x="21.805" y="2" width="0.8" height="49.4" fill="#a8a8a8"/><rect x="33.152499999999996" y="2" width="0.8" height="49.4" fill="#a8a8a8"/><rect x="9.344999999999999" y="25.256" width="0.9" height="6" fill="#444"/><rect x="20.915" y="25.256" width="0.9" height="6" fill="#444"/><rect x="31.3725" y="25.256" width="0.9" height="6" fill="#444"/><rect x="34.265" y="25.256" width="0.9" height="6" fill="#444"/></g>
<g fill="#6593c8">
<rect x="1088.1" y="894" width="48.4" height="30.8"/>
<rect x="1089" y="926.8" width="47" height="3.2"/>
<path d="M1084.8,879.6 L1088.5,879.6 Q1094.5,882 1094.8,890 L1087.5,890 Z"/>
<rect x="1087.5" y="891" width="7" height="1.2"/>
<rect x="1118.5" y="885.9" width="12.5" height="4.5"/>
<rect x="1131" y="886.6" width="6" height="3.2"/>
<path d="M1114.3,890.3 L1114.3,887.5 L1116.5,885.9 L1117.5,885.9 L1117.5,890.3 Z"/>
<rect x="1114.2" y="891" width="3.2" height="1.6"/>
<rect x="1119.5" y="890.3" width="1.2" height="3.8"/>
<rect x="1128" y="890.3" width="1.2" height="3.8"/>
</g>
<g fill="none" stroke="#cfe0f5" stroke-width="0.9">
<rect x="1090.6" y="895.6" width="12.6" height="26"/>
<rect x="1115.6" y="899.2" width="18.2" height="21.2"/>
<line x1="1090.6" y1="910.5" x2="1103.2" y2="910.5"/>
</g>
<g fill="#e8f0fa">
<rect x="1092" y="897.5" width="9.5" height="3.8"/>
<path d="M1110.3,899 L1106.8,917 L1111.5,908 Z"/>
<rect x="1125" y="909" width="7" height="1"/><rect x="1125" y="911.5" width="7" height="1"/><rect x="1125" y="914" width="7" height="1"/><rect x="1125" y="916.3" width="7" height="1"/>
</g>
<g fill="#6593c8"><rect x="1093" y="898.4" width="2" height="2"/><rect x="1096" y="898.4" width="2" height="2"/><rect x="1099" y="898.4" width="2" height="2"/></g>

<g><rect x="1151.1" y="882.9" width="52.8" height="49.1" fill="#c4c4c4"/><rect x="1151.1" y="929.9" width="52.8" height="2.2" fill="#555"/><rect x="1154.1" y="899.8" width="5.6" height="6.1" fill="#3a3a3a"/><rect x="1152.8999999999999" y="885" width="7" height="1.2" fill="#777"/><rect x="1152.8999999999999" y="887.5" width="5" height="1.2" fill="#555"/><ellipse cx="1156.6" cy="892.5" rx="1.4" ry="0.9" fill="#444"/><circle cx="1156.6" cy="915" r="0.8" fill="#666"/><rect x="1161.36" y="883" width="0.7" height="47" fill="#adadad"/><rect x="1164.6599999999999" y="899.8" width="5.6" height="6.1" fill="#3a3a3a"/><rect x="1163.4599999999998" y="885" width="7" height="1.2" fill="#777"/><rect x="1163.4599999999998" y="887.5" width="5" height="1.2" fill="#555"/><ellipse cx="1167.1599999999999" cy="892.5" rx="1.4" ry="0.9" fill="#444"/><circle cx="1167.1599999999999" cy="915" r="0.8" fill="#666"/><rect x="1171.9199999999998" y="883" width="0.7" height="47" fill="#adadad"/><rect x="1175.2199999999998" y="899.8" width="5.6" height="6.1" fill="#3a3a3a"/><rect x="1174.0199999999998" y="885" width="7" height="1.2" fill="#777"/><rect x="1174.0199999999998" y="887.5" width="5" height="1.2" fill="#555"/><ellipse cx="1177.7199999999998" cy="892.5" rx="1.4" ry="0.9" fill="#444"/><circle cx="1177.7199999999998" cy="915" r="0.8" fill="#666"/><rect x="1182.48" y="883" width="0.7" height="47" fill="#adadad"/><rect x="1185.78" y="899.8" width="5.6" height="6.1" fill="#3a3a3a"/><rect x="1184.58" y="885" width="7" height="1.2" fill="#777"/><rect x="1184.58" y="887.5" width="5" height="1.2" fill="#555"/><ellipse cx="1188.28" cy="892.5" rx="1.4" ry="0.9" fill="#444"/><circle cx="1188.28" cy="915" r="0.8" fill="#666"/><rect x="1193.04" y="883" width="0.7" height="47" fill="#adadad"/><rect x="1196.34" y="899.8" width="5.6" height="6.1" fill="#3a3a3a"/><rect x="1195.1399999999999" y="885" width="7" height="1.2" fill="#777"/><rect x="1195.1399999999999" y="887.5" width="5" height="1.2" fill="#555"/><ellipse cx="1198.84" cy="892.5" rx="1.4" ry="0.9" fill="#444"/><circle cx="1198.84" cy="915" r="0.8" fill="#666"/><rect x="1151.1" y="895.2" width="52.8" height="0.6" fill="#b0b0b0"/><rect x="1151.1" y="912.4" width="52.8" height="0.6" fill="#b0b0b0"/></g>
<text x="102" y="857.0" font-size="9.5" text-anchor="start" fill="#111" stroke="#000" stroke-width="0.18">toPCC</text>
<text x="102" y="910.0" font-size="9.5" text-anchor="start" fill="#111" stroke="#000" stroke-width="0.18">from_PCC</text>
<path d="M99,906.5 L94,902.5 L94,910.5 Z" fill="#353d7a"/>
<text x="102" y="962.0" font-size="9.5" text-anchor="start" fill="#111" stroke="#000" stroke-width="0.18">from_PMS</text>
<path d="M99,958.5 L94,954.5 L94,962.5 Z" fill="#353d7a"/>
<path d="M60,853.5 L65,849.5 L65,857.5 Z" fill="#353d7a"/>
<line x1="65" y1="853.5" x2="98" y2="853.5" stroke="#7f85ad" stroke-width="1.4"/>
<line x1="61" y1="906.5" x2="94" y2="906.5" stroke="#7f85ad" stroke-width="1.4"/>
<line x1="61" y1="958.5" x2="94" y2="958.5" stroke="#7f85ad" stroke-width="1.4"/>
<rect x="3.5" y="843.9" width="56.5" height="18.5" fill="#fff" stroke="#4a4a4a" stroke-width="1.1" rx="0.8"/>
<text x="32.0" y="857.0" font-size="9.6" text-anchor="middle" fill="#111" stroke="#000" stroke-width="0.18">toPCCess</text>
<rect x="3.5" y="896.9" width="56.5" height="18.5" fill="#fff" stroke="#4a4a4a" stroke-width="1.1" rx="0.8"/>
<text x="32.0" y="910.0" font-size="9.6" text-anchor="middle" fill="#111" stroke="#000" stroke-width="0.18">synch_ref</text>
<rect x="3.5" y="948.9" width="56.5" height="18.5" fill="#fff" stroke="#4a4a4a" stroke-width="1.1" rx="0.8"/>
<text x="32.0" y="962.0" font-size="9.6" text-anchor="middle" fill="#111" stroke="#000" stroke-width="0.18">DER_control</text>
<text x="425" y="910.0" font-size="9.5" text-anchor="start" fill="#111" stroke="#000" stroke-width="0.18">from_PMS</text>
<path d="M422,906.5 L417,902.5 L417,910.5 Z" fill="#353d7a"/>
<line x1="384" y1="906.5" x2="417" y2="906.5" stroke="#7f85ad" stroke-width="1.4"/>
<rect x="326.5" y="896.9" width="56.5" height="18.5" fill="#fff" stroke="#4a4a4a" stroke-width="1.1" rx="0.8"/>
<text x="355.0" y="910.0" font-size="9.6" text-anchor="middle" fill="#111" stroke="#000" stroke-width="0.18">DER_control</text>
<text x="741" y="910.0" font-size="9.5" text-anchor="start" fill="#111" stroke="#000" stroke-width="0.18">from_PMS</text>
<path d="M738,906.5 L733,902.5 L733,910.5 Z" fill="#353d7a"/>
<line x1="700" y1="906.5" x2="733" y2="906.5" stroke="#7f85ad" stroke-width="1.4"/>
<rect x="642.5" y="896.9" width="56.5" height="18.5" fill="#fff" stroke="#4a4a4a" stroke-width="1.1" rx="0.8"/>
<text x="671.0" y="910.0" font-size="9.6" text-anchor="middle" fill="#111" stroke="#000" stroke-width="0.18">DER_control</text>
<text x="1072" y="857.0" font-size="9.5" text-anchor="start" fill="#111" stroke="#000" stroke-width="0.18">toPCC</text>
<text x="1072" y="910.0" font-size="9.5" text-anchor="start" fill="#111" stroke="#000" stroke-width="0.18">from_PCC</text>
<path d="M1069,906.5 L1064,902.5 L1064,910.5 Z" fill="#353d7a"/>
<text x="1072" y="962.0" font-size="9.5" text-anchor="start" fill="#111" stroke="#000" stroke-width="0.18">from_PMS</text>
<path d="M1069,958.5 L1064,954.5 L1064,962.5 Z" fill="#353d7a"/>
<path d="M1030,853.5 L1035,849.5 L1035,857.5 Z" fill="#353d7a"/>
<line x1="1035" y1="853.5" x2="1068" y2="853.5" stroke="#7f85ad" stroke-width="1.4"/>
<line x1="1031" y1="906.5" x2="1064" y2="906.5" stroke="#7f85ad" stroke-width="1.4"/>
<line x1="1031" y1="958.5" x2="1064" y2="958.5" stroke="#7f85ad" stroke-width="1.4"/>
<rect x="973.5" y="843.9" width="56.5" height="18.5" fill="#fff" stroke="#4a4a4a" stroke-width="1.1" rx="0.8"/>
<text x="1002.0" y="857.0" font-size="9.6" text-anchor="middle" fill="#111" stroke="#000" stroke-width="0.18">toPCCdg</text>
<rect x="973.5" y="896.9" width="56.5" height="18.5" fill="#fff" stroke="#4a4a4a" stroke-width="1.1" rx="0.8"/>
<text x="1002.0" y="910.0" font-size="9.6" text-anchor="middle" fill="#111" stroke="#000" stroke-width="0.18">synch_ref</text>
<rect x="973.5" y="948.9" width="56.5" height="18.5" fill="#fff" stroke="#4a4a4a" stroke-width="1.1" rx="0.8"/>
<text x="1002.0" y="962.0" font-size="9.6" text-anchor="middle" fill="#111" stroke="#000" stroke-width="0.18">DER_control</text>
<polygon points="786.5,889.8 790.6,888.6 786.3,899.8 794.2,899.6 781.2,923.2 784.6,906.5 782.3,903" fill="#5b8fd0"/>
</svg>
<!-- vertical scrollbar -->
<div class="abs" style="left:1905px;top:139px;width:15px;height:897px;background:#e8e8e8;border-left:1px solid #bdbdbd;border-right:1px solid #c8c8c8"></div>
<div class="abs" style="left:1906px;top:139px;width:13px;height:14px;background:#fafafa;border-bottom:1px solid #c0c0c0"></div>
<div class="abs" style="left:1906px;top:1022px;width:13px;height:14px;background:#fafafa;border-top:1px solid #c0c0c0"></div>
<div class="abs" style="left:1906px;top:598px;width:13px;height:51px;background:linear-gradient(90deg,#fdfdfd,#f2f2f2);border-top:1px solid #bdbdbd;border-bottom:1px solid #bdbdbd"></div>
<svg class="abs" style="left:1905px;top:139px" width="15" height="897" viewBox="1905 139 15 897">
 <path d="M1908,147 L1916,147 L1912,143 Z" fill="#444"/>
 <path d="M1908,1027.5 L1916,1027.5 L1912,1031.5 Z" fill="#444"/>
</svg>
<!-- horizontal scrollbar -->
<div class="abs" style="left:0;top:1036px;width:1920px;height:15px;background:#e6e6e6;border-top:1px solid #bdbdbd;border-bottom:1px solid #c0c0c0"></div>
<div class="abs" style="left:0;top:1037px;width:14px;height:13px;background:#f7f7f7;border-right:1px solid #c6c6c6"></div>
<div class="abs" style="left:1891px;top:1037px;width:14px;height:13px;background:#f7f7f7;border-left:1px solid #c6c6c6"></div>
<div class="abs" style="left:1905px;top:1037px;width:15px;height:13px;background:#ededed;border-left:1px solid #c6c6c6"></div>
<div class="abs" style="left:861px;top:1037px;width:234px;height:13px;background:linear-gradient(#fdfdfd,#f0f0f0);border-left:1px solid #bdbdbd;border-right:1px solid #bdbdbd"></div>
<svg class="abs" style="left:0;top:1036px" width="1920" height="15" viewBox="0 1036 1920 15">
 <path d="M5,1043 L9,1039 L9,1047 Z" fill="#444"/>
 <path d="M1901,1043 L1897,1039 L1897,1047 Z" fill="#444"/>
</svg>
<div class="abs" style="left:0;top:1051px;width:1920px;height:29px;background:#f0f0f0"></div>
<div class="abs" style="left:0;top:1048px;width:278px;height:32px;background:#fff;border-top:1px solid #999;border-right:1px solid #8e8e8e;border-bottom:1px solid #aaa;box-shadow:2px 0 5px rgba(0,0,0,0.13)"></div>
<div class="abs" style="left:953px;top:1052px;width:1px;height:1px;background:#9a9a9a"></div><div class="abs" style="left:956px;top:1052px;width:1px;height:1px;background:#9a9a9a"></div><div class="abs" style="left:959px;top:1052px;width:1px;height:1px;background:#9a9a9a"></div><div class="abs" style="left:962px;top:1052px;width:1px;height:1px;background:#9a9a9a"></div><div class="abs" style="left:965px;top:1052px;width:1px;height:1px;background:#9a9a9a"></div><div class="abs" style="left:968px;top:1052px;width:1px;height:1px;background:#9a9a9a"></div>
</body></html>
